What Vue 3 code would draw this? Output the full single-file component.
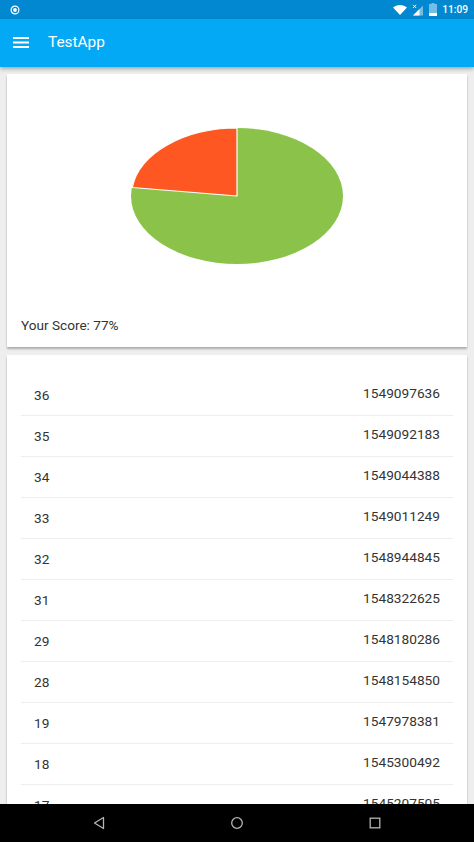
<script setup>
const rows = [
  ['36', '1549097636'], ['35', '1549092183'], ['34', '1549044388'], ['33', '1549011249'],
  ['32', '1548944845'], ['31', '1548322625'], ['29', '1548180286'], ['28', '1548154850'],
  ['19', '1547978381'], ['18', '1545300492'], ['17', '1545207505']
]
</script>

<template>
  <div class="screen">
    <div class="status">
      <svg class="rec" width="10" height="10" viewBox="0 0 10 10"><circle cx="5" cy="5" r="3.9" fill="none" stroke="#fff" stroke-width="1.2"/><circle cx="5" cy="5" r="1.9" fill="#fff"/></svg>
      <div class="status-right">
        <svg width="14" height="10" viewBox="0 0 14 10"><path d="M0 2.600C3.800-.8 10.200-.8 14 2.600L7 10z" fill="#fff"/></svg>
        <svg width="12" height="12" viewBox="0 0 12 12"><path d="M11 1.500V11.500H1z" fill="#fff" opacity=".45"/><path d="M7.500 5V11.500H1L7.500 5z" fill="#fff"/><path d="M1 .8l3.200 3.200M4.200 .8L1 4" stroke="#fff" stroke-width=".9"/></svg>
        <svg width="8" height="13" viewBox="0 0 8 13"><path d="M2.500 0h3v1H8v12H0V1h2.500z" fill="#fff" opacity=".45"/><rect y="10" width="8" height="3" fill="#fff"/></svg>
        <span class="clock">11:09</span>
      </div>
    </div>
    <header class="bar">
      <svg width="16" height="11" viewBox="0 0 16 11"><path d="M0 0h16v2H0zM0 4.500h16v2H0zM0 9h16v2H0z" fill="#fff"/></svg>
      <span class="title">TestApp</span>
    </header>
    <main class="content">
      <section class="card score">
        <svg class="pie" width="460" height="190" viewBox="0 0 460 190">
          <ellipse cx="230" cy="100" rx="106" ry="68" fill="#8bc34a"/>
          <path d="M230 100V32A105.500 68 0 0 0 125.300 91.500z" fill="#ff5722" stroke="#fff" stroke-width="1.200" stroke-linejoin="round"/>
        </svg>
        <p class="score-text">Your Score: 77%</p>
      </section>
      <section class="card list">
        <div v-for="r in rows" :key="r[0]" class="row">
          <span class="id">{{ r[0] }}</span>
          <span class="stamp">{{ r[1] }}</span>
        </div>
      </section>
    </main>
    <nav class="nav">
      <svg width="14" height="14" viewBox="0 0 14 14"><path d="M11.500 1.500V12.500L2.500 7z" fill="none" stroke="#b5b5b5" stroke-width="1.300" stroke-linejoin="round"/></svg>
      <svg width="14" height="14" viewBox="0 0 14 14"><circle cx="7" cy="7" r="5.300" fill="none" stroke="#b5b5b5" stroke-width="1.300"/></svg>
      <svg width="14" height="14" viewBox="0 0 14 14"><rect x="2.200" y="2.200" width="9.600" height="9.600" fill="none" stroke="#b5b5b5" stroke-width="1.300"/></svg>
    </nav>
  </div>
</template>

<style scoped>
.screen {
  width: 474px;
  height: 842px;
  display: flex;
  flex-direction: column;
  overflow: hidden;
  background: #eeeeee;
  font-family: Roboto, "Liberation Sans", sans-serif;
  color: #333333;
}
.status {
  height: 19px;
  flex: none;
  box-sizing: border-box;
  background: #0288d1;
  display: flex;
  align-items: center;
  justify-content: space-between;
  padding: 0 6px 0 10px;
}
.rec { display: block; }
.status-right {
  display: flex;
  align-items: center;
  gap: 5px;
}
.clock {
  color: #fff;
  font-size: 10.200px;
  font-weight: 500;
}
.bar {
  height: 48px;
  flex: none;
  box-sizing: border-box;
  background: #03a9f4;
  display: flex;
  align-items: center;
  gap: 19px;
  padding: 0 0 2px 13px;
  color: #fff;
  box-shadow: 0 2px 4px rgba(0, 0, 0, 0.3);
  position: relative;
  z-index: 1;
}
.title {
  font-size: 15.400px;
}
.content {
  flex: 1;
  min-height: 0;
  overflow: hidden;
  padding: 7px 7px 0;
  display: flex;
  flex-direction: column;
  gap: 8px;
}
.card {
  background: #fff;
  box-shadow: 0 2px 2px rgba(0, 0, 0, 0.28);
}
.score {
  height: 273px;
  flex: none;
  display: flex;
  flex-direction: column;
  justify-content: space-between;
  padding-top: 22px;
  box-sizing: border-box;
}
.pie { display: block; }
.score-text {
  margin: 0;
  padding: 0 0 13px 14px;
  font-size: 13.600px;
  line-height: 17px;
}
.list {
  flex: none;
  padding: 20px 14px 0;
}
.row {
  height: 41px;
  box-sizing: border-box;
  display: flex;
  justify-content: space-between;
  padding: 0 13px;
  border-bottom: 1px solid #eeeeee;
  font-size: 13.700px;
}
.id { line-height: 40px; }
.stamp { line-height: 36px; }
.nav {
  height: 38px;
  flex: none;
  background: #000;
  display: flex;
  align-items: center;
  justify-content: space-between;
  padding: 0 92px;
  position: relative;
  z-index: 1;
}
</style>
